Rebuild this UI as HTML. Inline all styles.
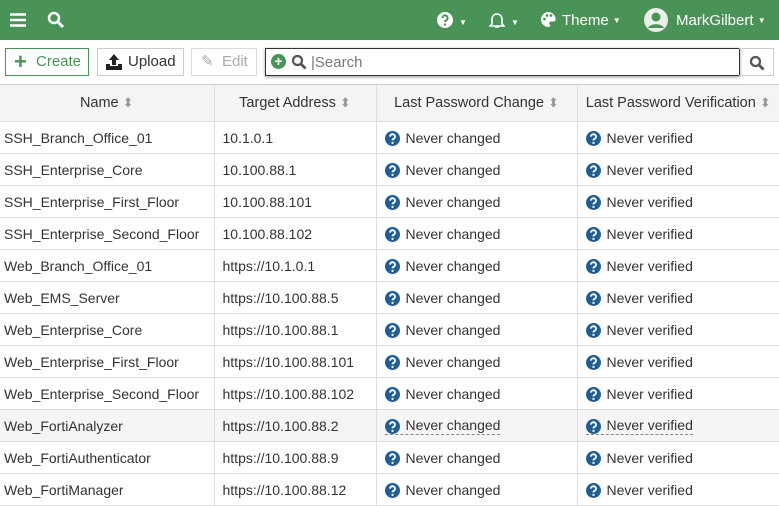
<!DOCTYPE html>
<html><head><meta charset="utf-8"><style>
*{box-sizing:border-box;margin:0;padding:0}
body{width:779px;height:505px;overflow:hidden;font-family:"Liberation Sans",sans-serif;font-size:14px;color:#333;background:#fff;position:relative}
.top{position:absolute;left:0;top:0;width:779px;height:40px;background:#4a9357;color:#fff}
.top span{position:absolute;top:12px;font-size:15px;line-height:17px}
.btn{position:absolute;top:48px;height:28px;border:1px solid #ccc;background:#fff;font-size:15px;line-height:26px;padding-left:30px}
.grid{position:absolute;left:0;top:84px;width:779px;border-collapse:collapse;table-layout:fixed}
.grid th{height:37px;background:#f4f4f4;font-weight:normal;font-size:14.5px;border-right:1px solid #ddd;border-top:1px solid #ccc;border-bottom:1px solid #ddd;text-align:center;white-space:nowrap}
.grid td{height:32px;border-right:1px solid #ddd;border-bottom:1px solid #ddd;padding-left:4px;font-size:14px;white-space:nowrap;overflow:hidden;vertical-align:middle;line-height:18px}
.grid td:nth-child(2){padding-left:8px}
.grid td:nth-child(3),.grid td:nth-child(4){padding-left:8px}
.w{display:inline-block;position:relative;padding-left:21px}
.q{position:absolute;left:0;top:2px;width:15px;height:15px}
.s{color:#999;font-size:13px}
tr.hl td{background:#f5f5f5}
tr.hl .w{border-bottom:1px dashed #888;line-height:17px}
</style></head><body>
<svg width="0" height="0" style="position:absolute"><defs><symbol id="qi" viewBox="0 0 16 16"><circle cx="8" cy="8" r="8" fill="#1f5f95"/><path d="M5.4 6a2.6 2.6 0 1 1 3.6 2.4c-.7.3-1 .8-1 1.6" stroke="#fff" stroke-width="2" fill="none"/><circle cx="8" cy="12.6" r="1.2" fill="#fff"/></symbol></defs></svg>
<div class="top">
<svg style="position:absolute;left:10px;top:13px" width="16" height="14"><path d="M0 1.5h16M0 7h16M0 12.5h16" stroke="#fff" stroke-width="2.5"/></svg>
<svg style="position:absolute;left:47px;top:11px" width="18" height="18" viewBox="0 0 18 18"><circle cx="7" cy="7" r="5" stroke="#fff" stroke-width="2.5" fill="none"/><path d="M11 11l5 5" stroke="#fff" stroke-width="3"/></svg>
<svg style="position:absolute;left:437px;top:12px" width="16" height="16" viewBox="0 0 16 16"><circle cx="8" cy="8" r="8" fill="#fff"/><path d="M5.4 6a2.6 2.6 0 1 1 3.6 2.4c-.7.3-1 .8-1 1.6" stroke="#4a9357" stroke-width="2" fill="none"/><circle cx="8" cy="12.6" r="1.2" fill="#4a9357"/></svg><span style="left:459px;font-size:8px;top:14px">▼</span>
<svg style="position:absolute;left:489px;top:11px" width="16" height="18"><path d="M3 13V8a5 5 0 0 1 10 0v5l2 2H1z M6 16h4" stroke="#fff" stroke-width="1.6" fill="none"/></svg><span style="left:511px;font-size:8px;top:14px">▼</span>
<svg style="position:absolute;left:540px;top:11px" width="17" height="17"><path d="M8.5 1a7.5 7.5 0 1 0 0 15c2 0 2-2 1-3s0-2.5 2-2.5h2c2 0 2.5-2 2-3.5A7.5 7.5 0 0 0 8.5 1z" fill="#fff"/><circle cx="4.5" cy="8" r="1.4" fill="#4a9357"/><circle cx="7" cy="4.5" r="1.4" fill="#4a9357"/><circle cx="11" cy="4.5" r="1.4" fill="#4a9357"/></svg>
<span style="left:562px">Theme <small style="font-size:8px;vertical-align:2px">▼</small></span>
<svg style="position:absolute;left:643px;top:7px" width="26" height="26"><circle cx="13" cy="13" r="12" fill="#e8f0e9"/><circle cx="13" cy="10" r="4.5" fill="#4a9357"/><path d="M5 21c2-5 14-5 16 0" fill="#4a9357"/></svg>
<span style="left:676px">MarkGilbert <small style="font-size:8px;vertical-align:2px">▼</small></span>
</div>
<div class="btn" style="left:5px;width:84px;border-color:#4a9357;color:#4a9357"><span style="position:absolute;left:8px;top:0;font-size:22px;font-weight:bold">+</span>Create</div>
<div class="btn" style="left:97px;width:87px"><svg style="position:absolute;left:8px;top:5px" width="16" height="16"><path d="M8 0l5 6h-3v5H6V6H3z" fill="#222"/><path d="M0 10h4v2h8v-2h4v6H0z" fill="#222"/></svg>Upload</div>
<div class="btn" style="left:191px;width:66px;color:#aaa;border-color:#ddd"><span style="position:absolute;left:9px">✎</span>Edit</div>
<div style="position:absolute;left:265px;top:48px;width:475px;height:28px;border:1px solid #333;box-shadow:0 1px 3px #999;background:#fff">
<span style="position:absolute;left:5px;top:5px;width:15px;height:15px;border-radius:50%;background:#4a9357;color:#fff;font-weight:bold;font-size:14px;line-height:15px;text-align:center">+</span>
<svg style="position:absolute;left:25px;top:5px" width="16" height="16"><circle cx="6.5" cy="6.5" r="4.5" stroke="#555" stroke-width="2.2" fill="none"/><path d="M10 10l4.5 4.5" stroke="#555" stroke-width="2.8"/></svg>
<span style="position:absolute;left:45px;top:5px;color:#777;font-size:15px">|Search</span></div>
<div style="position:absolute;left:739px;top:48px;width:35px;height:28px;border:1px solid #ccc;border-left:none">
<svg style="position:absolute;left:10px;top:6px" width="16" height="16"><circle cx="6.5" cy="6.5" r="4.5" stroke="#555" stroke-width="2.2" fill="none"/><path d="M10 10l4.5 4.5" stroke="#555" stroke-width="2.8"/></svg></div>
<table class="grid">
<colgroup><col style="width:214px"><col style="width:162px"><col style="width:201px"><col style="width:202px"></colgroup>
<tr><th>Name <span class="s">⬍</span></th><th>Target Address <span class="s">⬍</span></th><th>Last Password Change <span class="s">⬍</span></th><th style="border-right:none">Last Password Verification <span class="s">⬍</span></th></tr>
<tr><td>SSH_Branch_Office_01</td><td>10.1.0.1</td><td><span class="w"><svg class="q"><use href="#qi"/></svg>Never changed</span></td><td><span class="w"><svg class="q"><use href="#qi"/></svg>Never verified</span></td></tr>
<tr><td>SSH_Enterprise_Core</td><td>10.100.88.1</td><td><span class="w"><svg class="q"><use href="#qi"/></svg>Never changed</span></td><td><span class="w"><svg class="q"><use href="#qi"/></svg>Never verified</span></td></tr>
<tr><td>SSH_Enterprise_First_Floor</td><td>10.100.88.101</td><td><span class="w"><svg class="q"><use href="#qi"/></svg>Never changed</span></td><td><span class="w"><svg class="q"><use href="#qi"/></svg>Never verified</span></td></tr>
<tr><td>SSH_Enterprise_Second_Floor</td><td>10.100.88.102</td><td><span class="w"><svg class="q"><use href="#qi"/></svg>Never changed</span></td><td><span class="w"><svg class="q"><use href="#qi"/></svg>Never verified</span></td></tr>
<tr><td>Web_Branch_Office_01</td><td>https://10.1.0.1</td><td><span class="w"><svg class="q"><use href="#qi"/></svg>Never changed</span></td><td><span class="w"><svg class="q"><use href="#qi"/></svg>Never verified</span></td></tr>
<tr><td>Web_EMS_Server</td><td>https://10.100.88.5</td><td><span class="w"><svg class="q"><use href="#qi"/></svg>Never changed</span></td><td><span class="w"><svg class="q"><use href="#qi"/></svg>Never verified</span></td></tr>
<tr><td>Web_Enterprise_Core</td><td>https://10.100.88.1</td><td><span class="w"><svg class="q"><use href="#qi"/></svg>Never changed</span></td><td><span class="w"><svg class="q"><use href="#qi"/></svg>Never verified</span></td></tr>
<tr><td>Web_Enterprise_First_Floor</td><td>https://10.100.88.101</td><td><span class="w"><svg class="q"><use href="#qi"/></svg>Never changed</span></td><td><span class="w"><svg class="q"><use href="#qi"/></svg>Never verified</span></td></tr>
<tr><td>Web_Enterprise_Second_Floor</td><td>https://10.100.88.102</td><td><span class="w"><svg class="q"><use href="#qi"/></svg>Never changed</span></td><td><span class="w"><svg class="q"><use href="#qi"/></svg>Never verified</span></td></tr>
<tr class="hl"><td>Web_FortiAnalyzer</td><td>https://10.100.88.2</td><td><span class="w"><svg class="q"><use href="#qi"/></svg>Never changed</span></td><td><span class="w"><svg class="q"><use href="#qi"/></svg>Never verified</span></td></tr>
<tr><td>Web_FortiAuthenticator</td><td>https://10.100.88.9</td><td><span class="w"><svg class="q"><use href="#qi"/></svg>Never changed</span></td><td><span class="w"><svg class="q"><use href="#qi"/></svg>Never verified</span></td></tr>
<tr><td>Web_FortiManager</td><td>https://10.100.88.12</td><td><span class="w"><svg class="q"><use href="#qi"/></svg>Never changed</span></td><td><span class="w"><svg class="q"><use href="#qi"/></svg>Never verified</span></td></tr>
</table>
</body></html>
